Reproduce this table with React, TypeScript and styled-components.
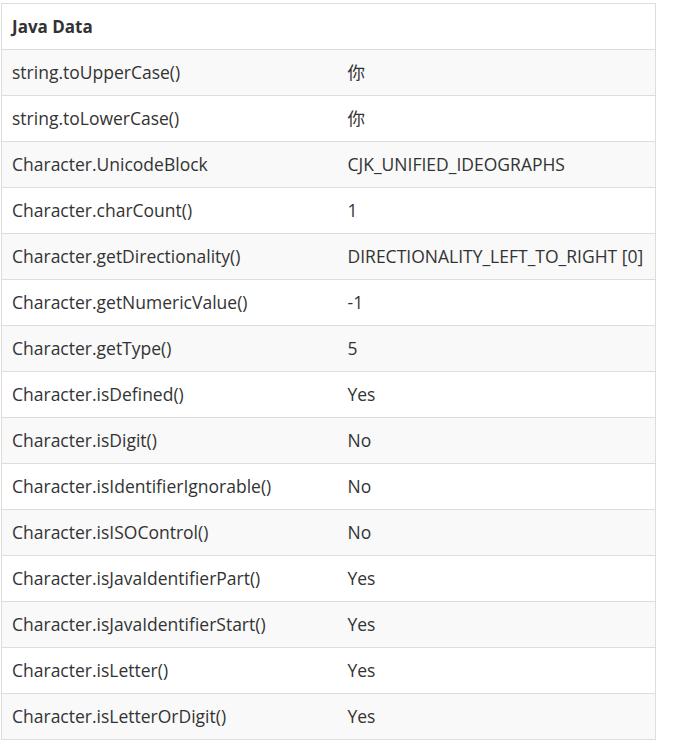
import React from "react";
import styled, { createGlobalStyle } from "styled-components";

const GlobalStyle = createGlobalStyle`
  html, body {
    margin: 0;
    padding: 0;
    background: #ffffff;
  }
  body {
    font-family: "Open Sans", "Noto Sans CJK SC", sans-serif;
    color: #333333;
  }
`;

const Page = styled.div`
  padding: 3px 0 0 1px;
`;

const DataTable = styled.table`
  width: 655px;
  table-layout: fixed;
  border-collapse: collapse;
  border: 1px solid #dddddd;
  font-size: 17.5px;
  line-height: 25px;
`;

const KeyCol = styled.col`
  width: 336px;
`;

const HeadCell = styled.th`
  text-align: left;
  font-weight: 700;
  font-size: 17px;
  padding: 10px 10px;
  border-bottom: 1px solid #dddddd;
`;

const Row = styled.tr<{ $striped: boolean }>`
  background: ${(p) => (p.$striped ? "#f9f9f9" : "#ffffff")};
`;

const Cell = styled.td`
  padding: 10px 10px;
  border-top: 1px solid #dddddd;
  white-space: nowrap;
`;

const rows: [string, string][] = [
  ["string.toUpperCase()", "你"],
  ["string.toLowerCase()", "你"],
  ["Character.UnicodeBlock", "CJK_UNIFIED_IDEOGRAPHS"],
  ["Character.charCount()", "1"],
  ["Character.getDirectionality()", "DIRECTIONALITY_LEFT_TO_RIGHT [0]"],
  ["Character.getNumericValue()", "-1"],
  ["Character.getType()", "5"],
  ["Character.isDefined()", "Yes"],
  ["Character.isDigit()", "No"],
  ["Character.isIdentifierIgnorable()", "No"],
  ["Character.isISOControl()", "No"],
  ["Character.isJavaIdentifierPart()", "Yes"],
  ["Character.isJavaIdentifierStart()", "Yes"],
  ["Character.isLetter()", "Yes"],
  ["Character.isLetterOrDigit()", "Yes"],
];

export default function App() {
  return (
    <>
      <GlobalStyle />
      <Page>
        <DataTable>
          <colgroup>
            <KeyCol />
            <col />
          </colgroup>
          <thead>
            <tr>
              <HeadCell colSpan={2}>Java Data</HeadCell>
            </tr>
          </thead>
          <tbody>
            {rows.map(([k, v], i) => (
              <Row key={k} $striped={i % 2 === 0}>
                <Cell>{k}</Cell>
                <Cell>{v}</Cell>
              </Row>
            ))}
          </tbody>
        </DataTable>
      </Page>
    </>
  );
}
